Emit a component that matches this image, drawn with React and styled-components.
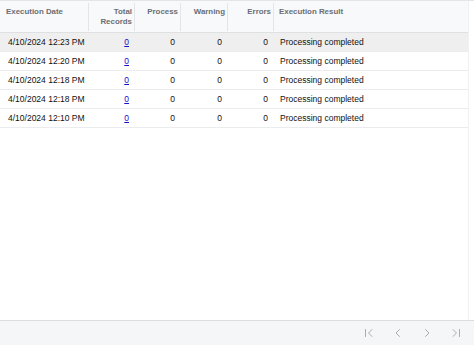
import React from "react";
import styled, { createGlobalStyle } from "styled-components";

const Global = createGlobalStyle`
  html, body { margin: 0; padding: 0; background: #fff; }
  body { font-family: "Liberation Sans", Arial, Helvetica, sans-serif; }
  #root { width: 474px; height: 345px; }
`;

const COLS = "89px 46px 46px 47px 46px 1fr";

const Wrap = styled.div`
  display: flex;
  flex-direction: column;
  width: 474px;
  height: 345px;
  box-sizing: border-box;
  border-top: 1px solid #e4e5e7;
  overflow: hidden;
`;

const Table = styled.div`
  flex: 1;
  display: flex;
  flex-direction: column;
  margin-right: 5px;
  border-right: 1px solid #f0f1f2;
`;

const HeaderRow = styled.div`
  display: grid;
  grid-template-columns: ${COLS};
  height: 32px;
  background: #f8f9fa;
  border-bottom: 1px solid #dfe0e2;
  box-sizing: border-box;
`;

const HeadCell = styled.div`
  padding: 4px ${(p) => (p.$right ? "2px" : "5px")} 0 ${(p) => (p.$last ? "5px" : "6px")};
  font-size: 7.9px;
  line-height: 10px;
  font-weight: bold;
  color: #6b6f75;
  text-align: ${(p) => (p.$right ? "right" : "left")};
  overflow: hidden;
  white-space: ${(p) => (p.$wrap ? "normal" : "nowrap")};
  border-right: ${(p) => (p.$last ? "none" : "1px solid #e4e5e8")};
  margin: 2px 0 1px;
  box-sizing: border-box;
`;

const Row = styled.div`
  display: grid;
  grid-template-columns: ${COLS};
  height: 19px;
  align-items: center;
  background: ${(p) => (p.$active ? "#efefef" : "#fff")};
  border-bottom: 1px solid #ebecee;
  box-sizing: border-box;
`;

const Cell = styled.div`
  font-size: 8.5px;
  color: #111;
  padding: 0 6px 0 ${(p) => (p.$right ? "0" : p.$inset ? `${p.$inset}px` : "8px")};
  text-align: ${(p) => (p.$right ? "right" : "left")};
  white-space: nowrap;
  overflow: hidden;
`;

const Link = styled.a`
  color: #1a0dcc;
  text-decoration: underline;
  cursor: pointer;
`;

const Footer = styled.div`
  height: 25px;
  flex: none;
  background: #f5f6f8;
  border-top: 1px solid #dcdddf;
  display: flex;
  align-items: center;
  justify-content: flex-end;
  padding-right: 11px;
  gap: 15px;
  box-sizing: border-box;
`;

const PageBtn = styled.button`
  border: none;
  background: none;
  padding: 0;
  width: 14px;
  height: 14px;
  display: flex;
  align-items: center;
  justify-content: center;
  color: #a9acb1;
  cursor: default;
`;

const Icon = ({ kind }) => {
  const s = { stroke: "currentColor", strokeWidth: 1, fill: "none", strokeLinecap: "round", strokeLinejoin: "round" };
  return (
    <svg width="12" height="12" viewBox="0 0 12 12">
      {kind === "first" && (
        <>
          <path d="M2.5 2.5v7" {...s} />
          <path d="M9 2.5 5.5 6 9 9.5" {...s} />
        </>
      )}
      {kind === "prev" && <path d="M7.5 2.5 4 6l3.5 3.5" {...s} />}
      {kind === "next" && <path d="M4.5 2.5 8 6 4.5 9.5" {...s} />}
      {kind === "last" && (
        <>
          <path d="M3 2.5 6.5 6 3 9.5" {...s} />
          <path d="M9.5 2.5v7" {...s} />
        </>
      )}
    </svg>
  );
};

const rows = [
  "4/10/2024 12:23 PM",
  "4/10/2024 12:20 PM",
  "4/10/2024 12:18 PM",
  "4/10/2024 12:18 PM",
  "4/10/2024 12:10 PM",
];

export default function App() {
  return (
    <>
      <Global />
      <Wrap>
        <Table>
          <HeaderRow>
            <HeadCell>Execution Date</HeadCell>
            <HeadCell $right $wrap>Total Records</HeadCell>
            <HeadCell $right>Process</HeadCell>
            <HeadCell $right>Warning</HeadCell>
            <HeadCell $right>Errors</HeadCell>
            <HeadCell $last>Execution Result</HeadCell>
          </HeaderRow>
          {rows.map((d, i) => (
            <Row key={i} $active={i === 0}>
              <Cell>{d}</Cell>
              <Cell $right>
                <Link>0</Link>
              </Cell>
              <Cell $right>0</Cell>
              <Cell $right>0</Cell>
              <Cell $right>0</Cell>
              <Cell $inset={6}>Processing completed</Cell>
            </Row>
          ))}
        </Table>
        <Footer>
          <PageBtn aria-label="First"><Icon kind="first" /></PageBtn>
          <PageBtn aria-label="Previous"><Icon kind="prev" /></PageBtn>
          <PageBtn aria-label="Next"><Icon kind="next" /></PageBtn>
          <PageBtn aria-label="Last"><Icon kind="last" /></PageBtn>
        </Footer>
      </Wrap>
    </>
  );
}
